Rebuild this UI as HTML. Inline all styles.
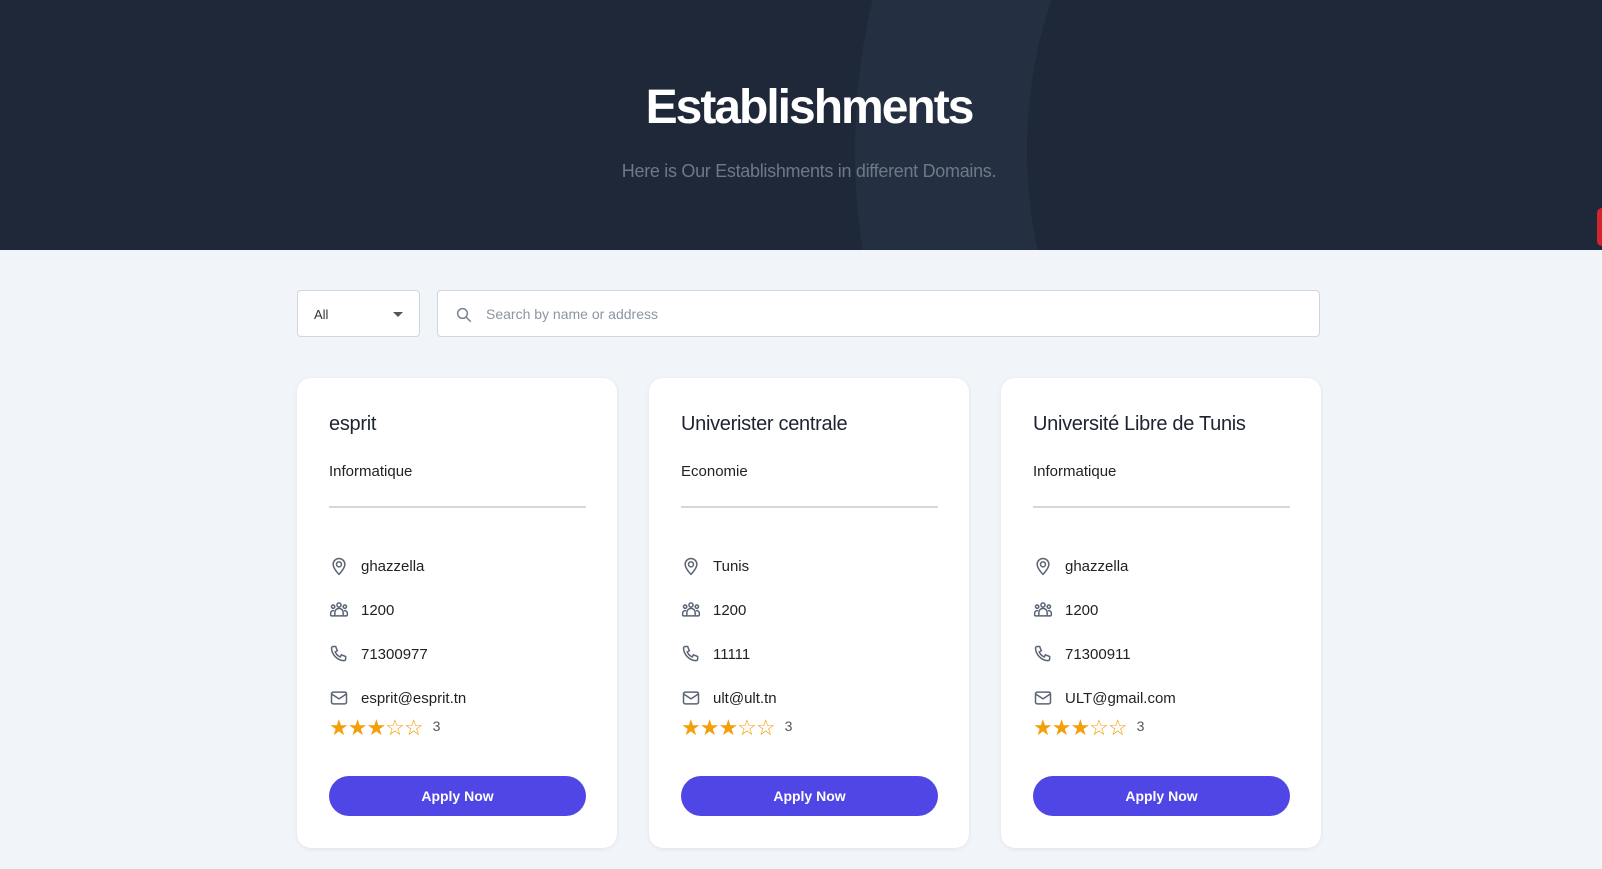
<!DOCTYPE html>
<html><head><meta charset="utf-8"><style>
*{box-sizing:border-box;margin:0;padding:0}
body{width:1602px;height:869px;overflow:hidden;background:#f1f4f9;font-family:"Liberation Sans",sans-serif;position:relative}
.hdr{position:absolute;left:0;top:0;width:1602px;height:250px;background:#1f2839;overflow:hidden}
.ring{position:absolute;left:855px;top:-495px;width:1290px;height:1290px;border-radius:50%;border:172px solid #242f42}
h1{position:absolute;top:80px;width:100%;left:8px;text-align:center;color:#fff;font-size:48px;font-weight:bold;letter-spacing:-2px}
.sub{position:absolute;top:161px;left:8px;width:100%;text-align:center;color:#6f7887;font-size:18px;letter-spacing:-0.3px}
.red{position:absolute;left:1597px;top:208px;width:10px;height:38px;background:#d3262c;border-radius:5px}
.sel,.search{position:absolute;top:290px;height:47px;background:#fff;border:1px solid #cfd6e0;border-radius:4px}
.sel{left:297px;width:123px;font-size:13px;color:#333;padding:16px 16px}
.sel:after{content:"";position:absolute;right:16px;top:21px;border:5px solid transparent;border-top:5px solid #555}
.search{left:437px;width:883px;color:#8d95a3;font-size:14px;padding:15px 0 0 48px}
.search svg{position:absolute;left:17px;top:15px}
.card{position:absolute;top:378px;width:320px;height:470px;background:#fff;border-radius:14px;box-shadow:0 1px 4px rgba(0,0,0,.08)}
.t{position:absolute;left:32px;top:35px;font-size:20px;color:#1d2330;letter-spacing:-0.3px}
.d{position:absolute;left:32px;top:85px;font-size:15px;color:#222}
.hr{position:absolute;left:32px;top:128px;width:257px;height:2px;background:#d5d7db}
.row{position:absolute;left:32px;font-size:15px;color:#222;display:flex;align-items:center}
.row svg{margin-right:12px}
.stars{position:absolute;left:32px;top:337px;font-size:22px;color:#f59e0b;letter-spacing:-1px}
.stars span{font-size:14px;color:#555;margin-left:10px;vertical-align:4px}
.btn{position:absolute;left:32px;top:398px;width:257px;height:40px;border-radius:20px;background:#4f46e5;color:#fff;font-weight:bold;font-size:14px;text-align:center;line-height:40px}
</style></head><body>
<div class="hdr"><div class="ring"></div>
<h1>Establishments</h1>
<div class="sub">Here is Our Establishments in different Domains.</div>
<div class="red"></div></div>
<div class="sel">All</div>
<div class="search"><svg width="18" height="18" viewBox="0 0 24 24" fill="none" stroke="#7a8391" stroke-width="2"><circle cx="10" cy="10" r="6.5"/><path d="M15 15l6 6"/></svg>Search by name or address</div>

<div class="card" style="left:297px">
<div class="t">esprit</div><div class="d">Informatique</div><div class="hr"></div>
<div class="row" style="top:178px"><svg width="20" height="20" viewBox="0 0 24 24" fill="none" stroke="#5b6475" stroke-width="1.8"><path d="M12 22s-7-7-7-12a7 7 0 0114 0c0 5-7 12-7 12z"/><circle cx="12" cy="10" r="3"/></svg>ghazzella</div>
<div class="row" style="top:222px"><svg width="20" height="20" viewBox="0 0 24 24" fill="none" stroke="#5b6475" stroke-width="1.8"><circle cx="12" cy="6" r="2.5"/><circle cx="5" cy="8" r="2"/><circle cx="19" cy="8" r="2"/><path d="M7 19v-4a5 5 0 0110 0v4zM2 19v-3a3 3 0 014-3M22 19v-3a3 3 0 00-4-3M2 19h20"/></svg>1200</div>
<div class="row" style="top:266px"><svg width="20" height="20" viewBox="0 0 24 24" fill="none" stroke="#5b6475" stroke-width="1.8"><path d="M5 3h3l2 5-2.5 1.5a11 11 0 006 6L15 13l5 2v3a2 2 0 01-2 2A16 16 0 013 5a2 2 0 012-2z"/></svg>71300977</div>
<div class="row" style="top:310px"><svg width="20" height="20" viewBox="0 0 24 24" fill="none" stroke="#5b6475" stroke-width="1.8"><rect x="3" y="5" width="18" height="14" rx="2"/><path d="M3 7l9 6 9-6"/></svg>esprit@esprit.tn</div>
<div class="stars">★★★☆☆<span>3</span></div>
<div class="btn">Apply Now</div></div>

<div class="card" style="left:649px">
<div class="t">Univerister centrale</div><div class="d">Economie</div><div class="hr"></div>
<div class="row" style="top:178px"><svg width="20" height="20" viewBox="0 0 24 24" fill="none" stroke="#5b6475" stroke-width="1.8"><path d="M12 22s-7-7-7-12a7 7 0 0114 0c0 5-7 12-7 12z"/><circle cx="12" cy="10" r="3"/></svg>Tunis</div>
<div class="row" style="top:222px"><svg width="20" height="20" viewBox="0 0 24 24" fill="none" stroke="#5b6475" stroke-width="1.8"><circle cx="12" cy="6" r="2.5"/><circle cx="5" cy="8" r="2"/><circle cx="19" cy="8" r="2"/><path d="M7 19v-4a5 5 0 0110 0v4zM2 19v-3a3 3 0 014-3M22 19v-3a3 3 0 00-4-3M2 19h20"/></svg>1200</div>
<div class="row" style="top:266px"><svg width="20" height="20" viewBox="0 0 24 24" fill="none" stroke="#5b6475" stroke-width="1.8"><path d="M5 3h3l2 5-2.5 1.5a11 11 0 006 6L15 13l5 2v3a2 2 0 01-2 2A16 16 0 013 5a2 2 0 012-2z"/></svg>11111</div>
<div class="row" style="top:310px"><svg width="20" height="20" viewBox="0 0 24 24" fill="none" stroke="#5b6475" stroke-width="1.8"><rect x="3" y="5" width="18" height="14" rx="2"/><path d="M3 7l9 6 9-6"/></svg>ult@ult.tn</div>
<div class="stars">★★★☆☆<span>3</span></div>
<div class="btn">Apply Now</div></div>

<div class="card" style="left:1001px">
<div class="t">Université Libre de Tunis</div><div class="d">Informatique</div><div class="hr"></div>
<div class="row" style="top:178px"><svg width="20" height="20" viewBox="0 0 24 24" fill="none" stroke="#5b6475" stroke-width="1.8"><path d="M12 22s-7-7-7-12a7 7 0 0114 0c0 5-7 12-7 12z"/><circle cx="12" cy="10" r="3"/></svg>ghazzella</div>
<div class="row" style="top:222px"><svg width="20" height="20" viewBox="0 0 24 24" fill="none" stroke="#5b6475" stroke-width="1.8"><circle cx="12" cy="6" r="2.5"/><circle cx="5" cy="8" r="2"/><circle cx="19" cy="8" r="2"/><path d="M7 19v-4a5 5 0 0110 0v4zM2 19v-3a3 3 0 014-3M22 19v-3a3 3 0 00-4-3M2 19h20"/></svg>1200</div>
<div class="row" style="top:266px"><svg width="20" height="20" viewBox="0 0 24 24" fill="none" stroke="#5b6475" stroke-width="1.8"><path d="M5 3h3l2 5-2.5 1.5a11 11 0 006 6L15 13l5 2v3a2 2 0 01-2 2A16 16 0 013 5a2 2 0 012-2z"/></svg>71300911</div>
<div class="row" style="top:310px"><svg width="20" height="20" viewBox="0 0 24 24" fill="none" stroke="#5b6475" stroke-width="1.8"><rect x="3" y="5" width="18" height="14" rx="2"/><path d="M3 7l9 6 9-6"/></svg>ULT@gmail.com</div>
<div class="stars">★★★☆☆<span>3</span></div>
<div class="btn">Apply Now</div></div>
</body></html>
